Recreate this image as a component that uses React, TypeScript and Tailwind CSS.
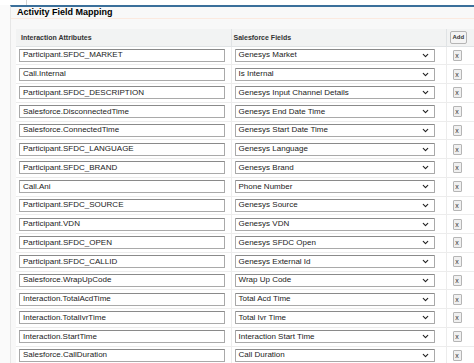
import { ChevronDown } from "lucide-react";

const rows: [string, string][] = [
  ["Participant.SFDC_MARKET", "Genesys Market"],
  ["Call.Internal", "Is Internal"],
  ["Participant.SFDC_DESCRIPTION", "Genesys Input Channel Details"],
  ["Salesforce.DisconnectedTime", "Genesys End Date Time"],
  ["Salesforce.ConnectedTime", "Genesys Start Date Time"],
  ["Participant.SFDC_LANGUAGE", "Genesys Language"],
  ["Participant.SFDC_BRAND", "Genesys Brand"],
  ["Call.Ani", "Phone Number"],
  ["Participant.SFDC_SOURCE", "Genesys Source"],
  ["Participant.VDN", "Genesys VDN"],
  ["Participant.SFDC_OPEN", "Genesys SFDC Open"],
  ["Participant.SFDC_CALLID", "Genesys External Id"],
  ["Salesforce.WrapUpCode", "Wrap Up Code"],
  ["Interaction.TotalAcdTime", "Total Acd Time"],
  ["Interaction.TotalIvrTime", "Total Ivr Time"],
  ["Interaction.StartTime", "Interaction Start Time"],
  ["Salesforce.CallDuration", "Call Duration"],
];

export default function App() {
  return (
    <div className="w-[474px] h-[363px] overflow-hidden bg-[#fafafa] text-black font-['Liberation_Sans',Arial,sans-serif]">
      {/* cut-off tab strip */}
      <div className="h-[5px] flex bg-white">
        <div className="w-[27px] border-r border-[#d4d4d4]" />
      </div>

      {/* page block */}
      <div className="ml-[10px] h-full border-t-2 border-[#3a6f9a] border-l border-l-[#e6e6e6] bg-[#f8f8f8]">
        <div className="h-[12px] pl-[6px] flex items-center text-[9px] font-bold border-b border-[#fbe9df]">
          Activity Field Mapping
        </div>

        <div className="pl-[5px] pt-[10px]">
          <table className="w-full border-collapse bg-white leading-none">
            <thead>
              <tr className="h-[17px] bg-[#f2f3f3] border-b border-[#e0e3e5]">
                <th className="w-[215px] pl-[5px] text-left text-[7px] font-bold text-[#333] border-r border-[#e0e3e5]">
                  Interaction Attributes
                </th>
                <th className="w-[215px] pl-[2px] text-left text-[7px] font-bold text-[#333] border-r border-[#e0e3e5]">
                  Salesforce Fields
                </th>
                <th className="pl-[3px]">
                  <div className="flex">
                    <button className="h-[13px] px-[2px] text-[6px] text-[#333] border border-[#b5b5b5] rounded-[2px] bg-[#f4f4f4] leading-none">
                      Add
                    </button>
                  </div>
                </th>
              </tr>
            </thead>
            <tbody>
              {rows.map(([attr, field]) => (
                <tr key={attr} className="h-[18.75px] border-b border-[#ececec]">
                  <td className="pl-[3px] border-r border-[#ececec]">
                    <div className="w-[206px] h-[13px] border border-[#a9a9a9] border-t-[#8a8a8a] flex items-center pl-[3px] text-[8px] text-[#222] bg-white">
                      {attr}
                    </div>
                  </td>
                  <td className="pl-[3px] border-r border-[#ececec]">
                    <div className="w-[200px] h-[13px] border border-[#a9a9a9] border-t-[#8a8a8a] rounded-[1px] flex items-center pl-[3px] pr-[4px] text-[8px] text-[#222] bg-white">
                      <span className="flex-1">{field}</span>
                      <ChevronDown className="w-[9px] h-[9px] text-[#222]" strokeWidth={3} />
                    </div>
                  </td>
                  <td className="pl-[6px]">
                    <button className="w-[9px] h-[11px] text-[7px] leading-none text-[#333] border border-[#b5b5b5] rounded-[1px] bg-[#f0f0f0] flex items-center justify-center">
                      x
                    </button>
                  </td>
                </tr>
              ))}
            </tbody>
          </table>
        </div>
      </div>
    </div>
  );
}
